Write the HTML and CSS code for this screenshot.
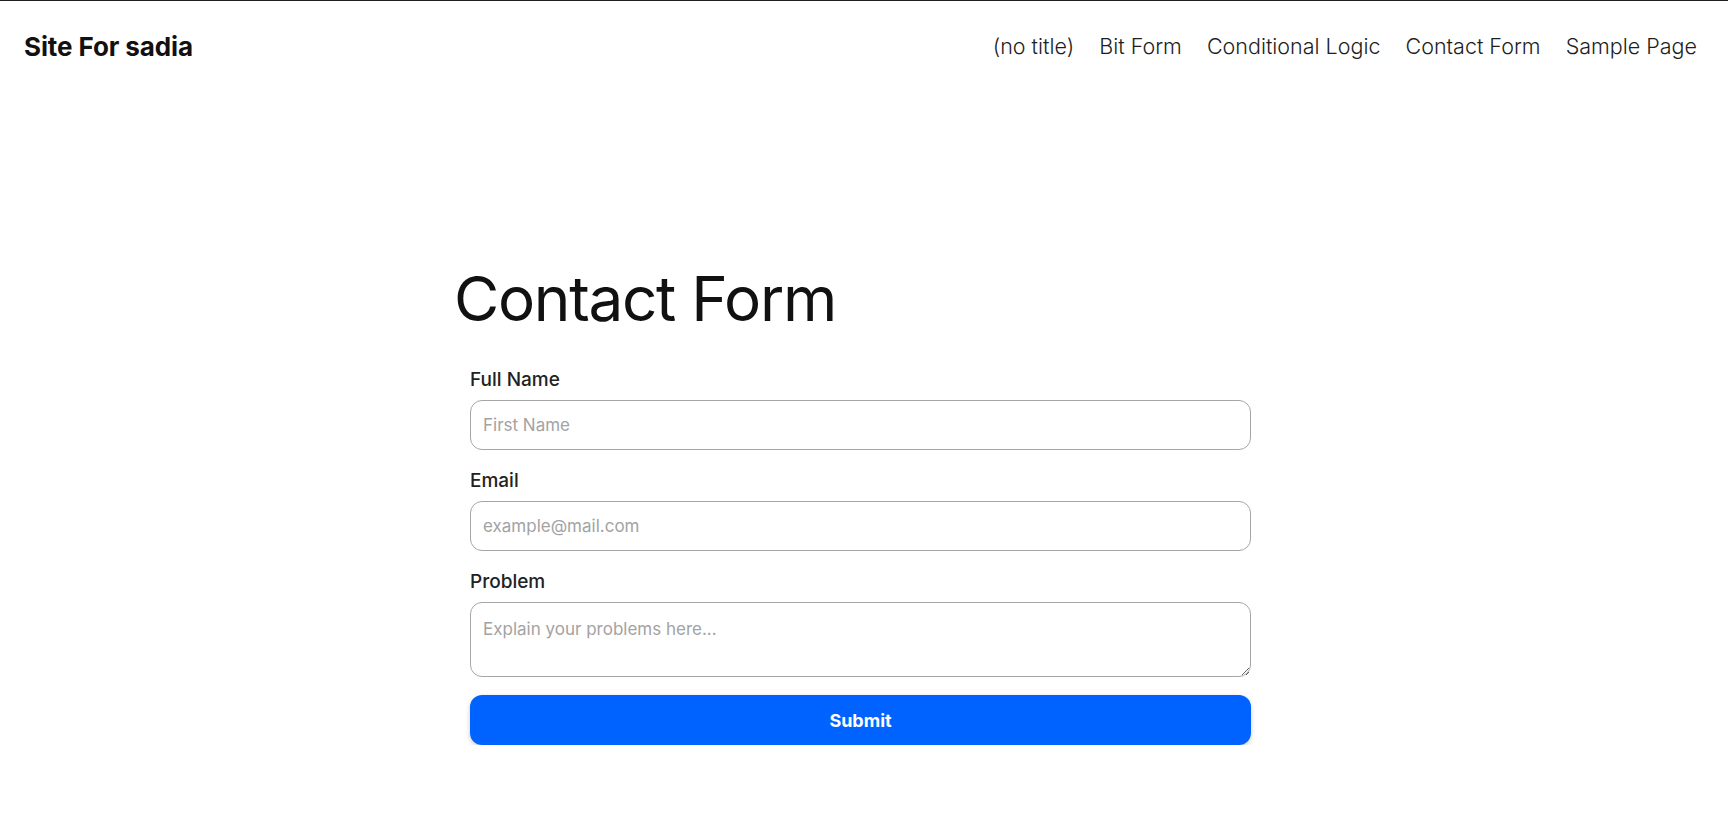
FILE: index.html
```html
<!DOCTYPE html>
<html lang="en">
<head>
<meta charset="utf-8">
<title>Contact Form – Site For sadia</title>
<link rel="stylesheet" href="styles.css">
</head>
<body>
<header class="site-header">
  <a class="site-title" href="#">Site For sadia</a>
  <nav class="site-nav">
    <a href="#">(no title)</a>
    <a href="#">Bit Form</a>
    <a href="#">Conditional Logic</a>
    <a href="#">Contact Form</a>
    <a href="#">Sample Page</a>
  </nav>
</header>
<main class="content">
  <h1 class="page-title">Contact Form</h1>
  <form class="contact-form">
    <div class="field">
      <label class="field-label" for="name">Full Name</label>
      <input class="field-input" id="name" type="text" placeholder="First Name">
    </div>
    <div class="field">
      <label class="field-label" for="email">Email</label>
      <input class="field-input" id="email" type="email" placeholder="example@mail.com">
    </div>
    <div class="field">
      <label class="field-label" for="problem">Problem</label>
      <textarea class="field-input field-textarea" id="problem" placeholder="Explain your problems here..."></textarea>
    </div>
    <button class="submit-btn" type="button">Submit</button>
  </form>
</main>
</body>
</html>
```

FILE: styles.css
```css
* { box-sizing: border-box; }

body {
  margin: 0;
  background: #ffffff;
  color: #111111;
  font-family: Inter, "Noto Sans", "Liberation Sans", sans-serif;
  border-top: 1px solid #1e1e1e;
}

a { color: inherit; text-decoration: none; }

.site-header {
  height: 90px;
  display: flex;
  align-items: center;
  justify-content: space-between;
  padding: 0 31px 0 24px;
}

.site-title {
  font-size: 26px;
  font-weight: 700;
  letter-spacing: -0.1px;
  color: #111111;
}

.site-nav {
  display: flex;
  gap: 25px;
  font-size: 21.5px;
  font-weight: 300;
  letter-spacing: 0;
  color: #1e1e1e;
}

.content {
  width: 820px;
  margin: 0 auto;
  padding-top: 171px;
}

.page-title {
  margin: 0 0 32px;
  font-size: 62px;
  line-height: 74px;
  font-weight: 400;
  letter-spacing: -1.3px;
  color: #111111;
}

.contact-form {
  width: 781px;
  margin-left: 16px;
  display: flex;
  flex-direction: column;
}

.field {
  display: flex;
  flex-direction: column;
  margin-bottom: 19px;
}

.field:last-of-type { margin-bottom: 18px; }

.field-label {
  font-size: 19px;
  line-height: 24px;
  font-weight: 500;
  color: #222222;
  margin-bottom: 8px;
}

.field-input {
  height: 50px;
  border: 1px solid #a6a6a6;
  border-radius: 12px;
  padding: 0 12px;
  font-family: inherit;
  font-size: 17px;
  color: #111;
  background: #fff;
  outline: none;
}

.field-input::placeholder { color: #a3a3a3; }

.field-textarea {
  height: 75px;
  padding: 14px 12px 8px;
  line-height: 1.5;
  resize: vertical;
}

.submit-btn {
  height: 50px;
  border: none;
  border-radius: 12px;
  background: #0063ff;
  color: #ffffff;
  font-family: inherit;
  font-size: 18px;
  font-weight: 700;
  box-shadow: 0 2px 5px rgba(0, 0, 0, 0.2);
  cursor: pointer;
}
```
